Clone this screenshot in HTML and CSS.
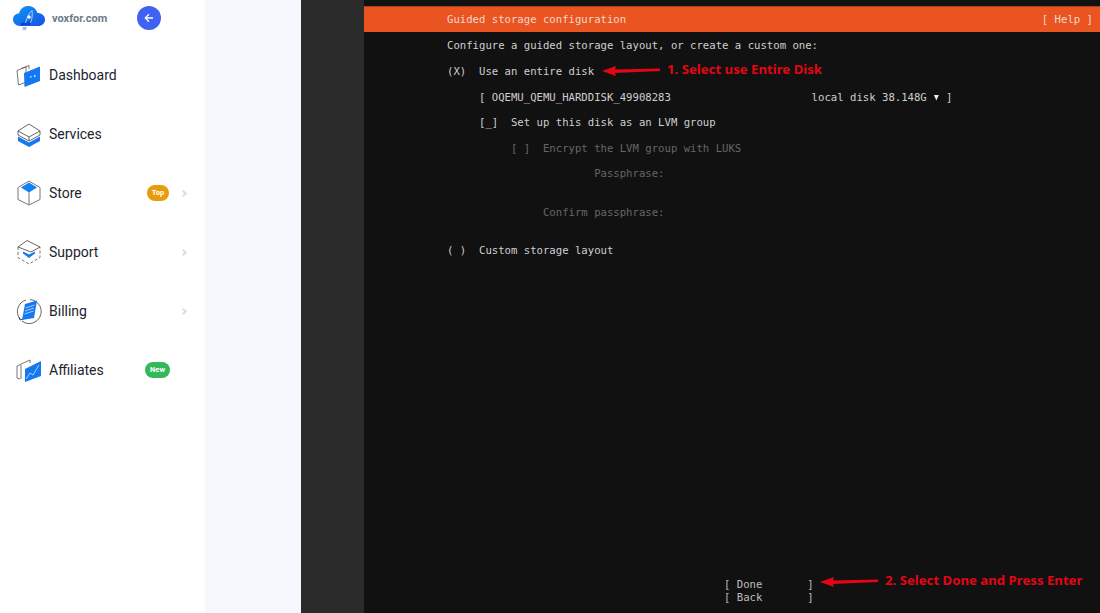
FILE: index.html
```html
<!DOCTYPE html>
<html lang="en">
<head>
<meta charset="utf-8">
<title>Guided storage configuration</title>
<link rel="stylesheet" href="styles.css">
</head>
<body>
<div class="page">
  <aside class="sidebar">
    <div class="brand">
      <svg class="logo" viewBox="0 0 32 28" width="32" height="28">
        <defs><linearGradient id="lg" x1="0" y1="0" x2="1" y2="1"><stop offset="0" stop-color="#0a9bf5"/><stop offset="1" stop-color="#1a4fe8"/></linearGradient></defs>
        <path d="M7 22C3 22 0 19 0 15.500C0 12 2.500 9.500 6 9.500C7 5 11 1.500 16 2C20 2.300 23 5 24.500 9C28.500 9 32 11.500 32 15.500C32 19.500 29 22 25 22Z" fill="url(#lg)"/>
        <path d="M8 19L19 17L17 21L8 22Z" fill="#0d47c9"/>
        <circle cx="16" cy="13" r="1.800" fill="#fff"/>
        <path d="M12.500 19C14 13 16 9 19 6.500C19.500 10 19.500 14 17.500 19" fill="none" stroke="#cfe3ff" stroke-width=".8"/>
        <path d="M10 23l-1 4 2-2 1 2 2-4z" fill="#8fb8f5"/>
      </svg>
      <span class="brand-name">voxfor.com</span>
      <span class="back">
        <svg viewBox="0 0 12 12" width="12" height="12"><path d="M10 6H2.500M6 2.300L2.300 6 6 9.700" fill="none" stroke="#fff" stroke-width="1.300"/></svg>
      </span>
    </div>
    <nav class="nav">
      <a class="item">
        <svg class="ico" viewBox="0 0 26 26"><path d="M1 8.500L10 5V20L2.500 23Z M5 6.500L13 3.500V7" fill="none" stroke="#555" stroke-width=".8"/><path d="M8 11L8.500 25L24 19V4.500L8 11Z" fill="#1478f0"/><path d="M14 14h1.500v1.500H14zM18 13h1.500v2H18z" fill="#cfe3ff"/></svg>
        <span class="label">Dashboard</span>
      </a>
      <a class="item">
        <svg class="ico" viewBox="0 0 26 26"><path d="M2 15.500L13 21.500L24 15.500V20L13 26L2 20Z" fill="#1478f0"/><path d="M2 10L13 3L24 10V14L13 20L2 14Z M2 10L13 16L24 10M13 16V20" fill="#fff" stroke="#555" stroke-width=".9"/></svg>
        <span class="label">Services</span>
      </a>
      <a class="item">
        <svg class="ico" viewBox="0 0 26 26"><path d="M13 1L24 7.500V19.500L13 25L2 19.500V7.500Z" fill="none" stroke="#666" stroke-width=".9"/><path d="M13 2.500L21 7.500L13 12.500L5 7.500Z" fill="#0f80f5"/><path d="M13 12.500V25" stroke="#888" stroke-width="1.200"/></svg>
        <span class="label">Store</span>
        <span class="badge top">Top</span>
        <span class="chev"></span>
      </a>
      <a class="item">
        <svg class="ico" viewBox="0 0 26 26"><path d="M2 8V18.500L13 25L24 18.500V8" fill="none" stroke="#666" stroke-width=".9" stroke-dasharray="3 2"/><path d="M2 8L11 1.500L24 8L15 13Z" fill="#fff" stroke="#555" stroke-width=".9"/><path d="M7 12.500L13 15.500L19 12.500V14.500L13 19L7 14.500Z" fill="#1478f0"/></svg>
        <span class="label">Support</span>
        <span class="chev"></span>
      </a>
      <a class="item">
        <svg class="ico" viewBox="0 0 26 26"><path d="M4 21A12 12 0 0 1 10 2M14 1.500A12 12 0 0 1 18 24.500A12 12 0 0 1 6 23" fill="none" stroke="#555" stroke-width=".9"/><path d="M3 19l1 3 3-1" fill="none" stroke="#333" stroke-width=".9"/><path d="M9 6L21 2.500L18 20L6 22Z" fill="#1478f0"/><path d="M9.500 10L18.500 7M9 13L18 10M8.500 16L17.500 13" stroke="#cfe3ff" stroke-width=".8"/></svg>
        <span class="label">Billing</span>
        <span class="chev"></span>
      </a>
      <a class="item">
        <svg class="ico" viewBox="0 0 26 26"><path d="M1 9L14 3V6M1 9V21L4 22M5 8V22" fill="none" stroke="#555" stroke-width=".8"/><path d="M9 12L25 4V19L9 25Z" fill="#1478f0"/><path d="M10 22L14 16L17 18L23 8" fill="none" stroke="#cfe3ff" stroke-width=".8"/></svg>
        <span class="label">Affiliates</span>
        <span class="badge new">New</span>
      </a>
    </nav>
  </aside>
  <div class="gutter"></div>
  <div class="margin-dark"></div>
  <main class="term">
    <header class="term-head"><span>Guided storage configuration</span><span>[ Help ]</span></header>
    <div class="term-body">
      <div class="row">Configure a guided storage layout, or create a custom one:</div>
      <div class="row">(X)  Use an entire disk</div>
      <div class="row">     [ OQEMU_QEMU_HARDDISK_49908283                      local disk 38.148G <i class="tri"></i> ]</div>
      <div class="row">     [_]  Set up this disk as an LVM group</div>
      <div class="row dim">          [ ]  Encrypt the LVM group with LUKS</div>
      <div class="row dim">                       Passphrase:</div>
      <div class="row dim wide">               Confirm passphrase:</div>
      <div class="row wide">( )  Custom storage layout</div>
    </div>
    <div class="term-foot">
      <div class="foot-row">[ Done       ]</div>
      <div class="foot-row">[ Back       ]</div>
    </div>
    <div class="note note-one">
      <svg class="arrow" viewBox="0 0 60 12" width="60" height="12"><path d="M0 6L14 1L13 4.500L58 3.500L58 6L13 8L14 11Z" fill="#e30613"/></svg>
      <span class="note-text">1. Select use Entire Disk</span>
    </div>
    <div class="note note-two">
      <svg class="arrow" viewBox="0 0 60 12" width="60" height="12"><path d="M0 6L14 1L13 4.500L58 3.500L58 6L13 8L14 11Z" fill="#e30613"/></svg>
      <span class="note-text">2. Select Done and Press Enter</span>
    </div>
  </main>
</div>
</body>
</html>
```
FILE: styles.css
```css
* { box-sizing: border-box; }
html, body { margin: 0; height: 100%; overflow: hidden; }
body { font-family: Roboto, "Liberation Sans", sans-serif; }
.page { display: flex; height: 613px; width: 1100px; }

.sidebar { width: 205px; flex: none; background: #fff; padding-left: 13px; }
.gutter { width: 96px; flex: none; background: #f7f8fd; }
.margin-dark { width: 63px; flex: none; background: #2b2b2b; }

.brand { display: flex; align-items: center; height: 36px; }
.logo { flex: none; margin-top: 0; }
.brand-name { margin-left: 7px; width: 85px; font-size: 11px; font-weight: 700; color: #6b7b8c; }
.back { width: 24px; height: 24px; border-radius: 50%; background: #3f62f5; display: flex; align-items: center; justify-content: center; }

.nav { display: flex; flex-direction: column; margin-top: 9px; }
.item { display: flex; align-items: center; height: 59px; padding-left: 3px; }
.ico { width: 26px; height: 26px; flex: none; margin-right: 7px; }
.label { font-size: 14px; color: #1c2430; }
.badge { position: absolute; color: #fff; font-size: 7.500px; font-weight: 700; display: flex; align-items: center; justify-content: center; border-radius: 8px; height: 16px; }
.badge.top { left: 147px; width: 22px; background: #e89c0c; }
.badge.new { left: 145px; width: 25px; background: #35b858; }
.chev { position: absolute; left: 181px; margin-top: 2px; width: 5px; height: 5px; border-top: 2px solid #e3d8e6; border-right: 2px solid #e3d8e6; transform: rotate(45deg); }

.term { position: relative; flex: 1; background: #111; display: flex; flex-direction: column; padding-top: 6px; color: #cfcfcf; font-family: "DejaVu Sans Mono", "Liberation Mono", monospace; font-size: 10.630px; line-height: 12.800px; }
.term-head { height: 26px; border-top: 1px solid #a8401c; background: #e95420; color: #f1d8cc; display: flex; justify-content: space-between; align-items: center; padding: 1px 7px 0 83px; }
.term-body { display: flex; flex-direction: column; align-items: flex-start; padding: 1.400px 0 0 83px; }
.row { height: 25.600px; line-height: 25.600px; white-space: pre; }
.row.wide { margin-top: 12.800px; }
.term-foot { margin-top: auto; padding: 0 0 8px 360px; color: #bdbdbd; display: flex; flex-direction: column; align-items: flex-start; }
.foot-row { white-space: pre; }
.dim { color: #666; }
.tri { display: inline-block; width: 6.400px; height: 6px; background: #eee; clip-path: polygon(8% 0, 92% 0, 50% 100%); }

.note { position: absolute; display: flex; align-items: center; color: #e30613; font-family: "Noto Sans", "Open Sans", sans-serif; font-weight: 700; font-size: 13.200px; line-height: 16px; }
.note-one { left: 238px; top: 61px; }
.note-two { left: 456px; top: 572px; }
.arrow { flex: none; margin-top: 4px; margin-right: 5px; }
```
